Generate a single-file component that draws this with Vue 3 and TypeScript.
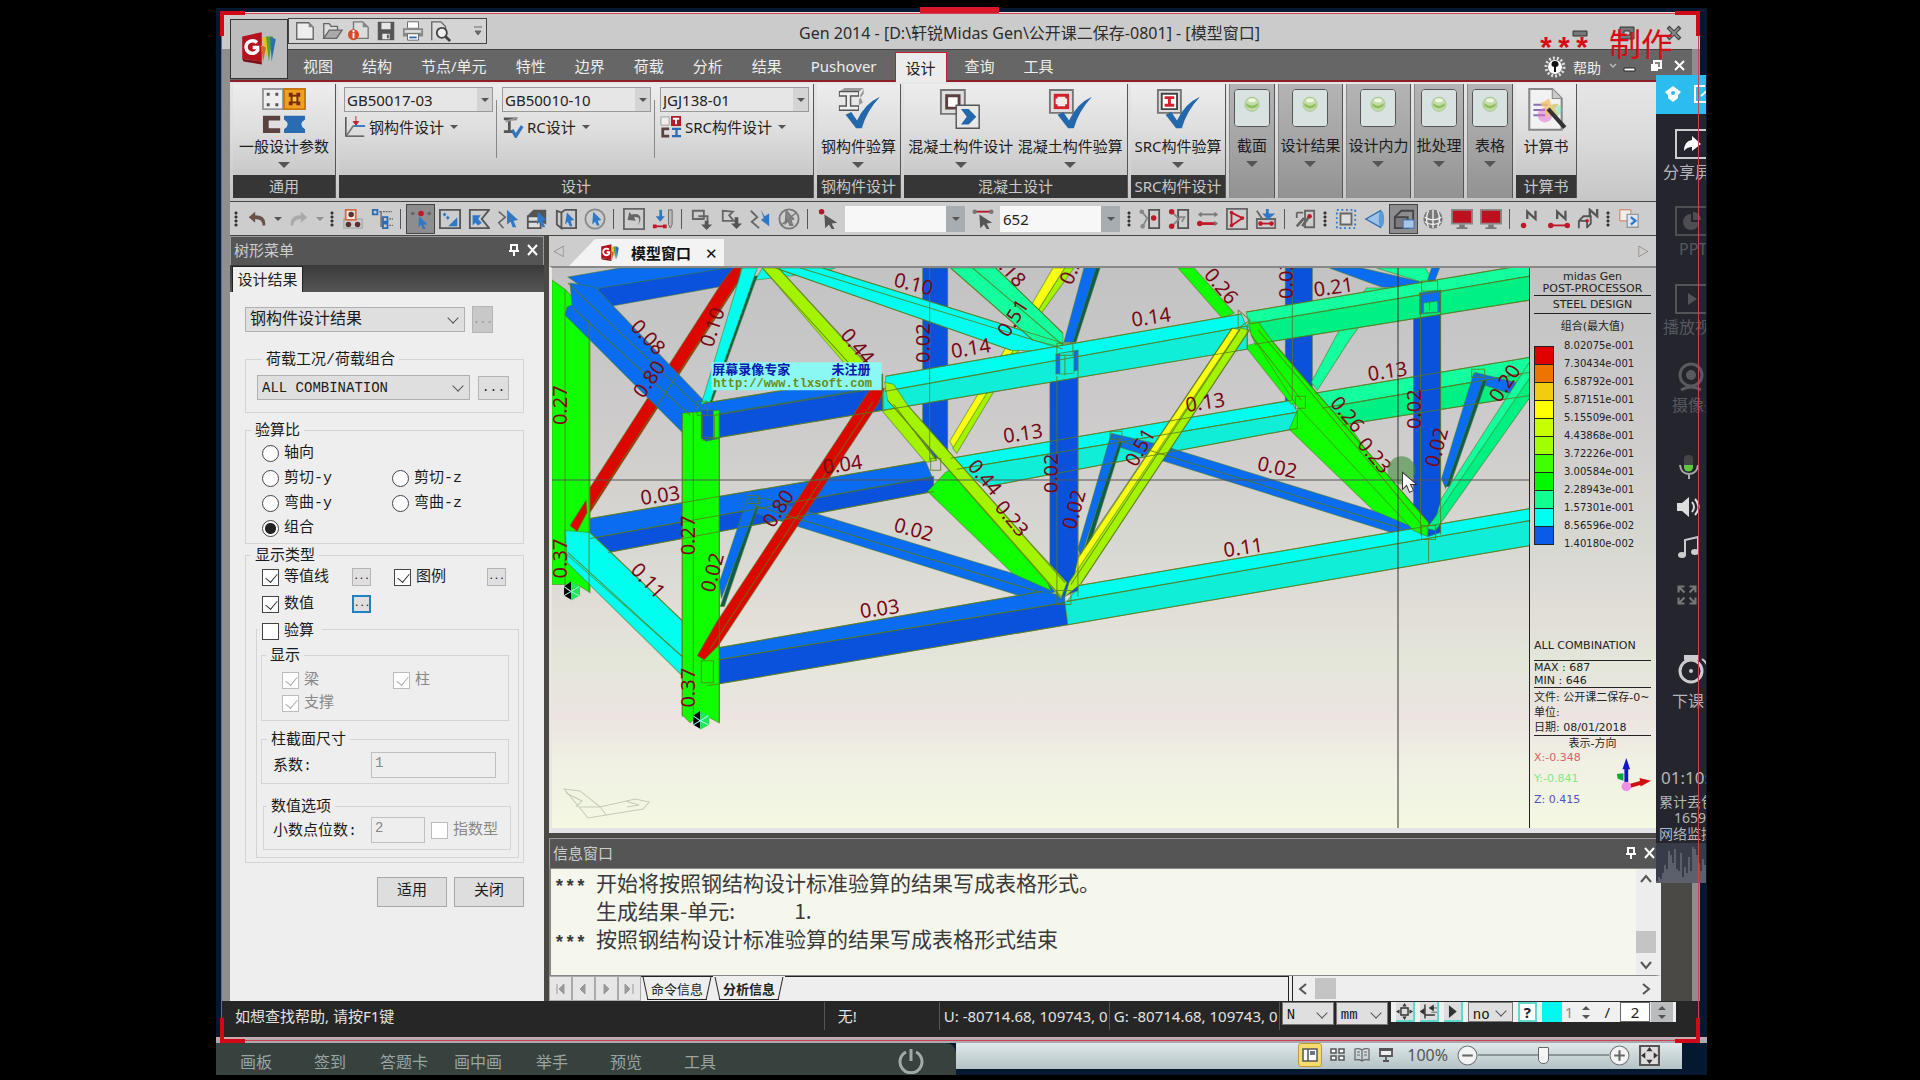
<script setup lang="ts">
import { ref } from 'vue'

interface Tool { k: 'btn' | 'sep' | 'grip' | 'caret' | 'combo'; icon?: string; on?: boolean; value?: string; dim?: boolean }
interface Shape { p: string; f: string }
interface Tag { t: string; x: number; y: number; r: number }

const glyph: Record<string, string> = {
  logo: '<path d="M3 6 17 3v21L3 22z" fill="#b5121f"/><path d="M3 22 17 24v2L4 24z" fill="#7c0d15"/><path d="M13.500 10.500A4.500 4.500 0 1 0 14 16v-2h-3.500" fill="none" stroke="#fff" stroke-width="2.500"/><path d="m17 7 3 14 2-15z" fill="#e8c020"/><path d="m20 6 2 18 3-18z" fill="#58a03a"/><path d="m23 6 1 18 3-16z" fill="#2b6fb0"/><path d="m16 12 2 12 2-10z" fill="#d8642a"/>',
  fresh: '<path d="M3 3h13l5 5v13H3z" fill="#eee" stroke="#666" stroke-width="1.500"/><path d="M16 3v5h5z" fill="#888"/>',
  open: '<path d="M3 20V4h6l2 3h7v4" fill="#ddd" stroke="#666" stroke-width="1.500"/><path d="M3 20 9 11h14l-6 9z" fill="#aaa" stroke="#666" stroke-width="1.500"/>',
  info: '<path d="M6 2h10l6 6v12H6z" fill="#ddd" stroke="#777" stroke-width="1.500"/><path d="M16 2v6h6z" fill="#888"/><circle cx="6" cy="16" r="6" fill="#d84a2c"/><path d="M6 11v2M6 14v6" stroke="#fff" stroke-width="2"/>',
  save: '<path d="M3 2h18v20H3z" fill="#555"/><path d="M7 3h10v7H7zM8 15h8v6H8z" fill="#e6e6e6"/><path d="M13 16h2v4h-2z" fill="#555"/>',
  print: '<path d="M6 2h12v7H6z" fill="#fff" stroke="#666"/><path d="M1 9h22v9H1z" fill="#888"/><path d="M3 11h18v3H3z" fill="#ddd"/><path d="M6 15h12v7H6z" fill="#fff" stroke="#666"/><path d="M8 18h8v2H8z" fill="#2d68b0"/>',
  preview: '<path d="M3 22V2h10l5 5v3" fill="#ddd" stroke="#666" stroke-width="1.500"/><circle cx="14" cy="14" r="5.500" fill="#eee" stroke="#444" stroke-width="2"/><path d="m18 18 5 5" stroke="#444" stroke-width="3"/>',
  general: '<g stroke-width="2"><path d="M1 1h21v21H1z" fill="#eee" stroke="#999"/><path d="M23 1h22v21H23z" fill="#f0a020" stroke="#c87808"/></g><path d="M5 5h3v3H5zM14 5h3v3h-3zM5 16h3v3H5zM14 16h3v3h-3z" fill="#555"/><path d="M28 5h4v2h4V5h4v4h-2v5h2v4h-4v-2h-4v2h-4v-4h2V9h-2z" fill="#7a2b10"/><path d="M32 9h4v5h-4z" fill="#f8c848"/><path d="M1 29h18v5H7v8h12v5H1z" fill="#5b4140"/><path d="M23 29h22v4q-8 5 0 10v4H23v-4q8-5 0-10z" fill="#2a6cb4"/>',
  graph: '<path d="M2 1v21h20" fill="none" stroke="#444" stroke-width="1.500"/><path d="m3 21 7-10h12" fill="none" stroke="#777" stroke-width="2"/><path d="M13 0v7M10 6h6l-3 4z" stroke="#c02030" fill="#c02030"/><path d="M11 11h12" stroke="#3c78c0" stroke-width="2"/>',
  rc: '<path d="M2 3h14M2 17h10M8 3v14" stroke="#555" stroke-width="3"/><path d="m4 6 13-4" stroke="#999" stroke-width="2"/><path d="m11 15 4 7 7-11" fill="none" stroke="#3474b8" stroke-width="3.500"/>',
  src: '<path d="M1 1h9v9H1z" fill="#eee" stroke="#999"/><path d="M12 0h11v11H12z" fill="#b21c28"/><path d="M14 3h7M17.500 3v6" stroke="#fff" stroke-width="2"/><path d="M10 14H3v8h7" fill="none" stroke="#5b4140" stroke-width="3"/><path d="M13 14h10M13 22h10M18 14v8" stroke="#2a6cb4" stroke-width="2.500"/>',
  steel: '<path d="m4 3 5-3h20l-5 4zM25 8l4-7v5l-5 6v6l4-3" fill="#999"/><path d="M3 6h21M3 21h21M13 6v15" stroke="#555" stroke-width="6"/><path d="M4 6h19M4 21h19M13 6v15" stroke="#eee" stroke-width="3"/>',
  bigcheck: '<path d="m10 28 6-3 6 9Q30 16 46 9 32 24 27 42h-6z" fill="#2468ac"/>',
  box: '<path d="M2 2h25v25H2z" fill="#ddd" stroke="#777" stroke-width="2"/><path d="M8 8h13v13H8z" fill="#fff" stroke="#5b4140" stroke-width="3"/>',
  boxarrow: '<path d="M18 18h24v24H18z" fill="#e8e8e8" stroke="#555" stroke-width="1.500"/><path d="M23 22h8l8 8-8 8h-8l6-8z" fill="#2468ac"/>',
  redbox: '<path d="M2 2h24v24H2z" fill="#ddd" stroke="#777" stroke-width="2"/><path d="M6 6h16v16H6z" fill="#d6202c"/><path d="M10 9h8v2h2v6h-2v2h-8v-2H8v-6h2z" fill="#f6e8e8"/>',
  srcbox: '<path d="M2 2h24v24H2z" fill="#ddd" stroke="#777" stroke-width="2"/><path d="M6 6h16v16H6z" fill="#fff" stroke="#444" stroke-width="2"/><path d="M9 10h10M9 18h10M14 10v8" stroke="#d6202c" stroke-width="3"/>',
  report: '<path d="M5 1h22l9 9v30H5z" fill="#f2f2f2" stroke="#888" stroke-width="2"/><path d="M27 1v9h9" fill="#ccc" stroke="#888"/><path d="M9 16h14M9 21h12M9 26h12" stroke="#8a6fb8" stroke-width="2"/><circle cx="20" cy="26" r="7" fill="#e070d0" opacity=".55"/><circle cx="30" cy="21" r="6" fill="#70e0b0" opacity=".5"/><path d="m24 10 2 6 7-1-4 5 4 6-8-2-5 5V19l-5-4z" fill="#f3c36a" opacity=".8"/><path d="m23 20 16 18" stroke="#333" stroke-width="4"/>',
  ball: '<path d="M0 0h36v38H0z" fill="#d8e2e0"/><circle cx="18" cy="15" r="7.500" fill="#c4dca8" stroke="#a9c596"/><path d="M12 14q6 5 12 0v3q-6 5-12 0z" fill="#8fbf5e"/><ellipse cx="18" cy="11" rx="4" ry="2" fill="#eef6e4"/>',
  undo: '<path d="M3 10 10 4v4q11 0 11 9v2h-3q0-7-8-7v4z" fill="#6b5048"/>',
  redo: '<path d="M21 10 14 4v4Q3 8 3 17v2h3q0-7 8-7v4z" fill="#a9a9a9"/>',
  nodes: '<path d="M2 12h20v10H2z" fill="none" stroke="#aaa" stroke-width="1.500"/><path d="M4 2h11v11H4z" fill="#f5e6e0" stroke="#d0704a" stroke-width="2"/><circle cx="10" cy="7" r="3" fill="#5b3030"/><circle cx="7" cy="18" r="3" fill="#5b3030"/><circle cx="17" cy="18" r="3" fill="#5b3030"/>',
  tree: '<path d="M2 2h5v5H2zM13 10h5v5h-5zM13 17h5v5h-5z" fill="none" stroke="#2a6cb4" stroke-width="2"/><path d="M9 4h2v16h2M11 12h2" fill="none" stroke="#666" stroke-width="1.500"/><path d="M13 4h10M20 12h4M20 19h4" stroke="#666" stroke-width="1.500" stroke-dasharray="2 1"/>',
  pick: '<path d="M1 6h22" stroke="#888"/><circle cx="12" cy="6" r="3" fill="#c01828"/><circle cx="3" cy="6" r="2" fill="#666"/><circle cx="21" cy="6" r="2" fill="#666"/><path d="m10 9 9 9h-4l2 5h-3l-2-5-3 3z" fill="#2f78c8"/>',
  win: '<path d="M1 2h22v20H1z" fill="none" stroke="#555" stroke-width="2"/><path d="m5 6 7 7" stroke="#2f78c8" stroke-width="3" stroke-dasharray="3 2"/><path d="M20 10v10H10z" fill="#2f78c8"/>',
  poly: '<path d="M23 2H2v20h21l-8-10z" fill="none" stroke="#555" stroke-width="2"/><path d="M5 8v11l3-3 3 3 4-3-4-4 3-4z" fill="#2f78c8"/>',
  zig: '<path d="m2 4 7 6-7 6 5 6" fill="none" stroke="#666" stroke-width="1.800"/><path d="m11 2 12 11-5 1 3 7h-4l-2-6-4 3z" fill="#2f78c8"/>',
  plane: '<path d="m2 8 6-6h14v16" fill="#555"/><path d="M2 9h14v13H2zM2 15h14" fill="#ddd" stroke="#555" stroke-width="2"/><path d="m13 4 9 9-4 1 3 7h-3l-3-6-3 3z" fill="#2f78c8"/>',
  vol: '<path d="m2 3 5 2v17l-5-4zM7 5l4-3h12v20H7z" fill="none" stroke="#555" stroke-width="2"/><path d="m13 5 8 8-4 1 2 6h-3l-2-5-3 3z" fill="#2f78c8"/>',
  circ: '<circle cx="12" cy="12" r="10.500" fill="none" stroke="#888" stroke-width="2"/><path d="m10 4 9 9-4 1 2 5h-3l-2-4-3 3z" fill="#2f78c8"/>',
  prev: '<path d="M1 1h22v22H1z" fill="none" stroke="#666" stroke-width="2"/><path d="M16 19q5-10-4-9l2 4-9-1 2-9 2 3q11-2 10 6-1 4-3 6z" fill="#666"/>',
  recent: '<path d="M8 2v7H4l5 6 5-6h-3V2z" fill="#2f78c8"/><path d="M2 20h12" stroke="#c01828" stroke-width="2"/><path d="M1 18h4v4H1zM12 18h4v4h-4z" fill="#c01828"/><path d="M18 2h4v16l-2 4-2-4z" fill="#bbb" stroke="#666"/>',
  act: '<path d="M2 3h12v9H2zM8 9h10v7" fill="none" stroke="#666" stroke-width="2"/><path d="M15 14v4h-4l6 6 6-6h-4v-4z" fill="#555"/>',
  act2: '<path d="m3 3 11 1-4 4 5 6H3z" fill="none" stroke="#666" stroke-width="2"/><path d="M16 10v7h-4l6 6 6-6h-4v-7z" fill="#555"/>',
  inv: '<path d="m2 3 7 7-6 5 8 7" fill="none" stroke="#666" stroke-width="2"/><path d="m13 2 4 7 5-3v14l-9-7 3-2z" fill="#2f78c8"/>',
  allact: '<circle cx="12" cy="12" r="10.500" fill="none" stroke="#777" stroke-width="2"/><path d="m9 3 8 9-3 1 2 6h-3l-2-5-3 3zM3 19 20 5" stroke="#777" stroke-width="1.500" fill="#888"/>',
  nodeSel: '<circle cx="5" cy="4" r="3" fill="#b01828"/><path d="m8 7 14 9-6 1 3 6h-3l-3-5-4 4z" fill="#555"/>',
  elemSel: '<path d="M2 4h20" stroke="#b01828" stroke-width="2"/><circle cx="3" cy="4" r="2.500" fill="#777"/><circle cx="21" cy="4" r="2.500" fill="#777"/><path d="m8 7 14 9-6 1 3 6h-3l-3-5-4 4z" fill="#555"/>',
  n1: '<path d="M11 2h11v20H11z" fill="none" stroke="#555" stroke-width="2"/><path d="m3 4 6 7-5 9" fill="none" stroke="#888" stroke-width="2"/><circle cx="3" cy="4" r="2.500" fill="#888"/><circle cx="4" cy="20" r="2.500" fill="#888"/><circle cx="16" cy="11" r="3" fill="#c01828"/>',
  n2: '<path d="M11 2h11v20H11z" fill="none" stroke="#555" stroke-width="2"/><path d="m4 4 8 8-8 8M12 10h6l-3 5" fill="none" stroke="#888" stroke-width="2"/><circle cx="4" cy="4" r="3" fill="#c01828"/><circle cx="4" cy="20" r="3" fill="#c01828"/>',
  n3: '<path d="M3 7h18" stroke="#777" stroke-width="2"/><path d="M3 17h18" stroke="#c01828" stroke-width="3"/><path d="m1 7 4-3v6zM23 7l-4-3v6z" fill="#777"/><circle cx="3" cy="17" r="3" fill="#c01828"/><path d="m23 17-4-3v6z" fill="#777"/>',
  n4: '<path d="M1 1h22v22H1z" fill="none" stroke="#666" stroke-width="2"/><path d="m6 5 12 6-12 8z" fill="none" stroke="#c01828" stroke-width="2"/><circle cx="6" cy="5" r="2" fill="#c01828"/><circle cx="18" cy="11" r="2" fill="#c01828"/><circle cx="6" cy="19" r="2" fill="#c01828"/>',
  n5: '<path d="M2 12h20v10H2zM2 3l6 9" fill="none" stroke="#666" stroke-width="2"/><path d="M7 17h11" stroke="#c01828" stroke-width="2"/><circle cx="6" cy="17" r="2.500" fill="#c01828"/><circle cx="18" cy="17" r="2.500" fill="#c01828"/><path d="M12 1h3v5h7l-8 7-6-7h4z" fill="#2f78c8"/>',
  n6: '<path d="M3 5h7M3 5v6M12 3h10v18H12z" fill="none" stroke="#666" stroke-width="2"/><path d="m3 20 8-9M16 10l-7 10" stroke="#666" stroke-width="3"/><circle cx="17" cy="9" r="2.500" fill="#c01828"/>',
  fit: '<path d="M6 6h12v12H6z" fill="#ddd" stroke="#666" stroke-width="2"/><path d="M2 2h20v20H2z" fill="none" stroke="#2f78c8" stroke-width="2" stroke-dasharray="2 3"/>',
  cone: '<path d="M2 12 18 3v18z" fill="#9cc4ea" stroke="#2f6cb0" stroke-width="1.500"/><ellipse cx="19" cy="12" rx="3" ry="9" fill="#5c9bd8"/>',
  hidden: '<path d="M2 10 9 3h13v13" fill="none" stroke="#444" stroke-width="2"/><path d="M2 10h14v12H2z" fill="#7c7c80" stroke="#444" stroke-width="2"/><path d="M11 13h12v9H11z" fill="#a9c4e4" stroke="#2f6cb0"/>',
  globe: '<circle cx="12" cy="12" r="10.500" fill="#777"/><path d="M3 10q9 6 18 0M3 15q9 6 18 0M12 2v20M7 3q-4 9 0 18M17 3q4 9 0 18" fill="none" stroke="#eee" stroke-width="1.500"/>',
  screen: '<path d="M1 2h22v15H1z" fill="#c01020" stroke="#888" stroke-width="2"/><path d="M9 18h6v3h3v2H6v-2h3z" fill="#777"/>',
  nn1: '<circle cx="5" cy="19" r="3" fill="#c01828"/><path d="M9 12V4l9 8V3" fill="none" stroke="#555" stroke-width="2.500"/>',
  nn2: '<path d="M3 19h18" stroke="#c01828" stroke-width="2"/><circle cx="3" cy="19" r="3" fill="#c01828"/><circle cx="21" cy="19" r="3" fill="#c01828"/><path d="M10 12V4l9 8V3" fill="none" stroke="#555" stroke-width="2.500"/>',
  nn3: '<path d="m2 14 5-5h8v8l-4 4M2 14h9v8M2 14v8" fill="none" stroke="#555" stroke-width="2"/><circle cx="11" cy="14" r="2" fill="#c01828"/><path d="M14 9V2l8 7V1" fill="none" stroke="#555" stroke-width="2.500"/>',
  copy: '<path d="M2 2h12v12H2z" fill="#eee" stroke="#d0704a"/><path d="M10 7h12v14H10z" fill="#dde6f2" stroke="#999" stroke-width="1.500"/><path d="m14 10 5 4-5 4" fill="none" stroke="#2f78c8" stroke-width="2.500"/>',
  move4: '<path d="M7 7h10v10H7z" fill="none" stroke="#333" stroke-width="2"/><path d="M12 0l3 5H9zM12 24l3-5H9zM0 12l5-3v6zM24 12l-5-3v6z" fill="#333"/>',
  shrink: '<path d="M7 2v20M7 17h14" stroke="#333" stroke-width="2"/><path d="m0 12 6-4v8zM24 7h-9M19 3l-6 4 6 4zM24 13h-8" stroke="#333" fill="#333"/>',
  play: '<path d="m7 3 11 9-11 9z" fill="#333"/>',
}

const quick = ['fresh', 'open', 'info', 'save', 'print', 'preview']
const tabs = ['视图', '结构', '节点/单元', '特性', '边界', '荷载', '分析', '结果', 'Pushover', '设计', '查询', '工具']
const activeTab = ref('设计')
const codes = [
  { code: 'GB50017-03', icon: 'graph', name: '钢构件设计' },
  { code: 'GB50010-10', icon: 'rc', name: 'RC设计' },
  { code: 'JGJ138-01', icon: 'src', name: 'SRC构件设计' },
]
const groups = [
  { title: '钢构件设计', w: 84, items: [{ name: '钢构件验算', art: glyph.steel + glyph.bigcheck }] },
  { title: '混凝土设计', w: 224, items: [{ name: '混凝土构件设计', art: glyph.box + glyph.boxarrow }, { name: '混凝土构件验算', art: glyph.redbox + glyph.bigcheck }] },
  { title: 'SRC构件设计', w: 95, items: [{ name: 'SRC构件验算', art: glyph.srcbox + glyph.bigcheck }] },
]
const folded = [
  { name: '截面', w: 46 }, { name: '设计结果', w: 65 }, { name: '设计内力', w: 65 }, { name: '批处理', w: 50 }, { name: '表格', w: 46 },
]

const b = (icon: string, on = false): Tool => ({ k: 'btn', icon, on })
const sep: Tool = { k: 'sep' }
const grip: Tool = { k: 'grip' }
const tools: Tool[] = [
  grip, b('undo'), { k: 'caret' }, b('redo'), { k: 'caret', dim: true }, grip, b('nodes'), b('tree'), sep,
  b('pick', true), b('win'), b('poly'), b('zig'), b('plane'), b('vol'), b('circ'), sep,
  b('prev'), b('recent'), sep, b('act'), b('act2'), b('inv'), b('allact'), sep,
  b('nodeSel'), { k: 'combo', value: '' }, b('elemSel'), { k: 'combo', value: '652' }, grip,
  b('n1'), b('n2'), b('n3'), b('n4'), b('n5'), sep, b('n6'), grip,
  b('fit'), b('cone'), b('hidden', true), b('globe'), b('screen'), b('screen'), sep, b('nn1'), b('nn2'), b('nn3'), grip, b('copy'),
]

const ratio = ref('组合')
const ratios = ['轴向', '', '剪切-y', '剪切-z', '弯曲-y', '弯曲-z', '组合']

const B1 = '#0a6cf0', B2 = '#0a52dc', C1 = '#00ffee', C2 = '#10eed8', T1 = '#14ff9e', T2 = '#00f084'
const G = '#10ff00', L = '#a4f400', Y = '#f8ff10', R = '#dc0800', K = '#0c5c50'
const shapes: Shape[] = [
  // far frame
  { f: G, p: '552,280 566,290 590,318 590,592 577,584 552,584' },
  { f: B1, p: '568,277 620,268 745,268 592,294' },
  { f: B2, p: '592,294 600,288 740,266 740,283 612,306' },
  { f: B2, p: '922,268 947,268 947,452 935,458 922,440' },
  { f: B2, p: '1284,268 1311,268 1311,392 1284,404' },
  { f: Y, p: '1052,268 1064,268 1030,322 953,448 949,441 1030,306' },
  { f: L, p: '1064,268 1073,268 1037,318 956,453 952,448 1030,322' },
  { f: T1, p: '1365,288 1385,288 1348,340 1316,390 1310,382 1338,330' },
  { f: B1, p: '590,518 925,461 932,478 590,540' },
  { f: B2, p: '590,538 933,476 933,491 608,552' },
  { f: C1, p: '950,458 1290,400 1296,412 956,469' },
  { f: C2, p: '956,469 1296,412 1296,428 987,486' },
  { f: T1, p: '1313,393 1529,357 1529,372 1320,408' },
  { f: T2, p: '1320,408 1529,372 1529,395 1340,425' },
  { f: R, p: '733,268 741,268 736,286 590,512 590,487 722,282' },
  { f: B1, p: '570,283 595,287 705,402 703,412 687,413 683,433 565,315 567,307 572,305' },
  { f: R, p: '586,500 587,512 577,531 570,525' },
  { f: C1, p: '755,280 762,268 835,268 822,272' },
  { f: C1, p: '775,268 822,268 1062,343 1062,352 1010,350' },
  { f: K, p: '753,276 757,276 711,404 706,404' },
  { f: C1, p: '742,268 757,268 709,404 701,404' },
  { f: L, p: '762,268 778,268 880,380 862,384' },
  { f: T1, p: '950,268 995,268 1062,333 1062,347 1032,340' },
  { f: G, p: '1177,268 1193,268 1233,313 1221,318' },
  { f: K, p: '1094,268 1099,268 1075,342 1070,342' },
  { f: B1, p: '1083,268 1095,268 1072,342 1063,342' },
  { f: B1, p: '1328,268 1360,268 1425,283 1400,288 1380,287' },
  { f: T1, p: '1375,268 1424,268 1434,286 1420,282' },
  { f: B1, p: '1430,268 1438,268 1432,284 1426,280' },
  // lower bracing
  { f: C1, p: '565,530 590,532 682,620 682,658 567,556' },
  { f: C1, p: '567,554 682,656 682,675 567,562' },
  { f: B1, p: '750,498 765,498 1062,588 1040,597 1025,597 756,513' },
  { f: K, p: '753,506 758,506 724,606 720,606' },
  { f: B1, p: '747,498 757,504 721,598 719,582' },
  { f: B1, p: '1110,433 1157,444 1413,523 1413,528 1390,532 1160,460 1116,446' },
  { f: K, p: '1116,442 1121,442 1084,560 1080,560' },
  { f: B1, p: '1110,434 1119,440 1080,556 1077,548' },
  { f: B1, p: '1473,372 1529,386 1529,400 1480,384' },
  { f: K, p: '1480,380 1485,380 1448,486 1444,486' },
  { f: B1, p: '1472,373 1482,378 1444,488 1440,478' },
  { f: B1, p: '718,647 1040,591 1064,595 1064,603 718,660' },
  { f: B2, p: '718,659 1064,602 1067,624 707,685' },
  { f: C1, p: '1078,585 1529,508 1529,521 1066,601' },
  { f: C2, p: '1064,601 1529,520 1529,545 1067,624' },
  { f: G, p: '927,491 945,472 956,466 1046,580 1050,590 1012,573' },
  { f: L, p: '882,411 893,404 936,460 925,462' },
  { f: G, p: '1288,429 1297,408 1340,414 1416,524 1405,524 1372,510' },
  { f: G, p: '1244,346 1258,342 1300,402 1290,404' },
  // top chord and near columns
  { f: B1, p: '703,403 882,374 882,388 715,416 700,410' },
  { f: B2, p: '715,414 882,386 882,410 702,440 702,412' },
  { f: B2, p: '1049,376 1077,370 1077,590 1060,597 1049,580' },
  { f: B2, p: '1412,305 1439,300 1439,532 1427,536 1412,520' },
  { f: C1, p: '885,376 1240,314 1246,328 885,392' },
  { f: C2, p: '883,391 1246,326 1246,349 883,410' },
  { f: T1, p: '1245,312 1529,264 1529,276 1248,325' },
  { f: T2, p: '1246,324 1529,276 1529,300 1254,344' },
  { f: B1, p: '1055,354 1077,350 1077,370 1055,374' },
  { f: C2, p: '1059,353 1073,351 1073,373 1059,374' },
  { f: B1, p: '1418,293 1439,290 1439,312 1418,314' },
  { f: T2, p: '1422,303 1436,301 1436,312 1422,313' },
  { f: L, p: '884,382 893,384 907,405 1030,543 1066,582 1060,598 1030,563 992,520 887,400' },
  { f: Y, p: '1231,328 1239,330 1072,582 1077,558' },
  { f: L, p: '1239,328 1248,330 1080,583 1064,596 1068,582' },
  { f: G, p: '1248,322 1257,322 1270,340 1427,522 1426,536 1412,530 1295,405 1250,335' },
  { f: T1, p: '1529,360 1529,378 1434,518 1440,498' },
  { f: T2, p: '1529,376 1529,396 1434,530 1425,528 1434,516' },
  { f: G, p: '682,413 719,410 719,722 700,712 690,722 682,714' },
  { f: B2, p: '701,410 713,410 713,438 719,438 706,441 701,438' },
  { f: R, p: '869,390 884,388 878,403 718,645 704,659 697,655 716,622' },
]
const wires = [
  'M565 290V590M589 320V592M693 413V718M719 413V722M682 413V716', 'M572 307 690 415M568 283 700 408M568 552 682 656M590 532 682 620',
  'M590 538 932 477M590 518 925 461M608 552 933 491', 'M956 469 1296 412M950 458 1290 400M987 486 1296 428V410',
  'M1313 393 1529 357M1320 408 1529 372M1340 425 1529 395', 'M703 403 882 374M715 415 882 387M702 440 882 410V374',
  'M885 376 1240 314M885 391 1246 326M883 410 1246 349V326', 'M1245 312 1529 264M1248 324 1529 276M1254 344 1529 300',
  'M718 647 1040 591M718 659 1064 602M707 685 1067 624', 'M1078 585 1529 508M1066 601 1529 520M1067 624 1529 545',
  'M929 268V460M1056 376V596M1077 350V596M1291 268V400M1419 292V534M1439 290V534', 'M762 268 862 378M778 268 876 374M907 405 1064 582M887 400 1060 596M893 404 936 460',
  'M1239 329 1070 584M1231 328 1077 556M1248 330 1080 583', 'M1257 330 1420 524M1270 340 1427 522M1250 335 1300 400', 'M775 268 1010 350M822 268 1062 343M800 268 1062 349',
  'M950 268 1032 340M995 268 1062 333M972 268 1062 345', 'M736 284 592 506M872 402 710 648M754 505 1040 592M1116 440 1400 528',
  'M697 401h10v14h-10zM702 415h12v22h-12zM701 660h12v22h-12zM747 495h11v8h-11zM1109 431h12v8h-12zM1470 369h13v8h-13z',
  'M1056 343h16v12h-16zM1064 355v20M1237 310l12 10-12 8zM1420 281h16v10h-16zM1428 291v20M1056 590h14v14h-14zM1420 525h14v14h-14zM1427 539v22M930 458h10v12h-10zM1294 396h10v12h-10z',
]
const tags: Tag[] = [
  { t: '0.10', x: 913, y: 284, r: 14 }, { t: '0.18', x: 1008, y: 269, r: 48 }, { t: '0.08', x: 648, y: 337, r: 47 }, { t: '0.80', x: 649, y: 379, r: -55 },
  { t: '0.10', x: 712, y: 327, r: -72 }, { t: '0.44', x: 857, y: 346, r: 50 }, { t: '0.02', x: 922, y: 343, r: -90 }, { t: '0.14', x: 970, y: 348, r: -9 },
  { t: '0.51', x: 1012, y: 318, r: -57 }, { t: '0.27', x: 560, y: 405, r: -90 }, { t: '0.03', x: 660, y: 495, r: -8 }, { t: '0.04', x: 842, y: 464, r: -8 },
  { t: '0.80', x: 778, y: 508, r: -57 }, { t: '0.02', x: 913, y: 529, r: 15 }, { t: '0.13', x: 1022, y: 433, r: -8 }, { t: '0.44', x: 984, y: 477, r: 50 },
  { t: '0.23', x: 1011, y: 518, r: 50 }, { t: '0.27', x: 688, y: 535, r: -90 }, { t: '0.02', x: 712, y: 572, r: -75 }, { t: '0.11', x: 648, y: 580, r: 47 },
  { t: '0.37', x: 560, y: 558, r: -90 }, { t: '0.37', x: 688, y: 687, r: -90 }, { t: '0.03', x: 879, y: 608, r: -8 }, { t: '0.14', x: 1150, y: 317, r: -8 },
  { t: '0.22', x: 1072, y: 265, r: -68 }, { t: '0.26', x: 1220, y: 286, r: 50 }, { t: '0.02', x: 1285, y: 279, r: -90 }, { t: '0.21', x: 1332, y: 287, r: -8 },
  { t: '0.13', x: 1204, y: 402, r: -8 }, { t: '0.13', x: 1386, y: 371, r: -8 }, { t: '0.51', x: 1139, y: 447, r: -60 }, { t: '0.02', x: 1050, y: 473, r: -90 },
  { t: '0.02', x: 1073, y: 509, r: -75 }, { t: '0.26', x: 1346, y: 414, r: 50 }, { t: '0.23', x: 1373, y: 455, r: 50 }, { t: '0.02', x: 1276, y: 467, r: 13 },
  { t: '0.02', x: 1412, y: 409, r: -90 }, { t: '0.02', x: 1435, y: 447, r: -75 }, { t: '0.20', x: 1503, y: 383, r: -57 }, { t: '0.11', x: 1242, y: 547, r: -8 },
]
const scale = [
  { c: '#e00000', v: '8.02075e-001' }, { c: '#ee7400', v: '7.30434e-001' }, { c: '#f2cc10', v: '6.58792e-001' }, { c: '#ffff00', v: '5.87151e-001' },
  { c: '#c8ff00', v: '5.15509e-001' }, { c: '#a0ff00', v: '4.43868e-001' }, { c: '#40ff00', v: '3.72226e-001' }, { c: '#00f800', v: '3.00584e-001' },
  { c: '#10ff90', v: '2.28943e-001' }, { c: '#00fff0', v: '1.57301e-001' }, { c: '#0a5ce8', v: '8.56596e-002' }, { c: '', v: '1.40180e-002' },
]
const dock = ['画板', '签到', '答题卡', '画中画', '举手', '预览', '工具']
const wave = [38, 34, 36, 30, 22, 26, 8, 12, 20, 6, 26, 28, 10, 34, 24, 30, 14, 28, 4, 6, 12, 20, 28, 16, 22].map((h, i) => ({ x: i * 2, h }))
</script>

<template>
  <div class="desk">
    <div class="screen">
      <div class="app">
        <header class="title">
          <button class="logo" aria-label="Gen"><svg viewBox="0 0 30 30" v-html="glyph.logo" /></button>
          <div class="quick">
            <button v-for="q in quick" :key="q" :aria-label="q"><svg viewBox="0 0 24 24" v-html="glyph[q]" /></button>
            <svg class="more" viewBox="0 0 12 12"><path d="M2 2h8M3 6h6L6 10z" stroke="#666" fill="#666" /></svg>
          </div>
          <h1>Gen 2014 - [D:\轩锐Midas Gen\公开课二保存-0801] - [模型窗口]</h1>
          <div class="winbtns">
            <button aria-label="最小化"><svg viewBox="0 0 16 16"><path d="M1 6h14v5H1z" fill="#777" stroke="#333" /></svg></button>
            <button aria-label="最大化"><svg viewBox="0 0 16 16"><path d="M1 2h14v12H1z" fill="#777" stroke="#333" /><path d="M5 6h6v4H5z" fill="#ccc" stroke="#333" /></svg></button>
            <button aria-label="关闭"><svg viewBox="0 0 16 16"><path d="m2 2 12 12M14 2 2 14" stroke="#444" stroke-width="4" /><path d="m3 3 10 10M13 3 3 13" stroke="#888" stroke-width="2" /></svg></button>
          </div>
        </header>

        <div class="frame">
          <nav class="menu">
            <button v-for="t in tabs" :key="t" :class="{ on: t === activeTab }" @click="activeTab = t">{{ t }}</button>
            <span class="grow" />
            <svg class="bulb" viewBox="0 0 22 22"><circle cx="11" cy="11" r="9" fill="none" stroke="#ddd" stroke-width="3" stroke-dasharray="2 2" /><circle cx="11" cy="11" r="7" fill="#fff" /><path d="M11 5a3 3 0 0 1 1 6v5h-2v-5a3 3 0 0 1 1-6" fill="#111" /></svg>
            <a href="#help">帮助</a>
            <svg class="mdi" viewBox="0 0 78 16"><path d="m2 6 3 3 3-3" fill="none" stroke="#bbb" stroke-width="1.500" /><path d="M16 10h11v3H16z" fill="#fff" stroke="#222" /><path d="M46 3h7v7h-7z" fill="#888" stroke="#fff" stroke-width="2" /><path d="M43 6h7v7h-7z" fill="#fff" /><path d="m67 3 9 9M76 3l-9 9" stroke="#fff" stroke-width="2" /></svg>
          </nav>

          <section class="ribbon">
            <div class="group" style="width: 103px">
              <div class="tools">
                <button class="big"><svg viewBox="0 0 46 48" v-html="glyph.general" />一般设计参数<i class="tri" /></button>
              </div>
              <footer>通用</footer>
            </div>
            <div class="group" style="width: 475px">
              <div class="tools codes">
                <div v-for="c in codes" :key="c.code" class="code">
                  <div class="pick"><select :aria-label="c.name"><option>{{ c.code }}</option></select><span><i class="tri small" /></span></div>
                  <button><svg viewBox="0 0 24 24" v-html="glyph[c.icon]" />{{ c.name }}<i class="tri small" /></button>
                </div>
              </div>
              <footer>设计</footer>
            </div>
            <div v-for="g in groups" :key="g.title" class="group" :style="{ width: g.w + 'px' }">
              <div class="tools">
                <button v-for="i in g.items" :key="i.name" class="big"><svg viewBox="0 0 46 48" v-html="i.art" />{{ i.name }}<i class="tri" /></button>
              </div>
              <footer>{{ g.title }}</footer>
            </div>
            <div v-for="f in folded" :key="f.name" class="group fold" :style="{ width: f.w + 'px' }">
              <div class="tools">
                <button class="big"><span class="tile"><svg viewBox="0 0 36 38" v-html="glyph.ball" /></span>{{ f.name }}<i class="tri" /></button>
              </div>
            </div>
            <div class="group" style="width: 61px">
              <div class="tools"><button class="big"><svg viewBox="0 0 42 44" v-html="glyph.report" />计算书</button></div>
              <footer>计算书</footer>
            </div>
          </section>

          <div class="bar">
            <template v-for="(t, i) in tools" :key="i">
              <button v-if="t.k === 'btn'" class="tool" :class="{ on: t.on }" :aria-label="t.icon"><svg viewBox="0 0 24 24" v-html="glyph[t.icon!]" /></button>
              <span v-else-if="t.k === 'sep'" class="sep" />
              <span v-else-if="t.k === 'grip'" class="grip" />
              <span v-else-if="t.k === 'caret'" class="drop" :class="{ dim: t.dim }"><i class="tri small" /></span>
              <div v-else class="entry"><select aria-label="选择"><option>{{ t.value }}</option></select><span><i class="tri small" /></span></div>
            </template>
          </div>

          <main class="body">
            <aside class="side">
              <div class="cap"><span>树形菜单</span><svg viewBox="0 0 30 14"><path d="M3 8V2h6v6M1 8h10M6 8v5" fill="none" stroke="#fff" stroke-width="2" /><path d="m20 2 9 10M29 2l-9 10" stroke="#fff" stroke-width="2" /></svg></div>
              <div class="stab"><span>设计结果</span></div>
              <form class="form" @submit.prevent>
                <div class="line top">
                  <div class="sel wide"><select aria-label="结果"><option>钢构件设计结果</option></select></div>
                  <button class="dots" disabled>...</button>
                </div>
                <fieldset class="f1">
                  <legend>荷载工况/荷载组合</legend>
                  <div class="line">
                    <div class="sel"><select class="mono" aria-label="荷载组合"><option>ALL COMBINATION</option></select></div>
                    <button class="dots mid">...</button>
                  </div>
                </fieldset>
                <fieldset class="f2">
                  <legend>验算比</legend>
                  <template v-for="(r, i) in ratios" :key="i">
                    <label v-if="r"><input v-model="ratio" type="radio" name="ratio" :value="r"><span>{{ r }}</span></label>
                    <span v-else />
                  </template>
                </fieldset>
                <fieldset class="f3">
                  <legend>显示类型</legend>
                  <div class="show">
                    <label><input type="checkbox" checked><span>等值线</span></label><button class="dots tiny">...</button>
                    <label><input type="checkbox" checked><span>图例</span></label><button class="dots tiny">...</button>
                  </div>
                  <div class="show second">
                    <label><input type="checkbox" checked><span>数值</span></label><button class="dots tiny focus">...</button>
                  </div>
                  <fieldset class="inner">
                    <legend><label><input type="checkbox"><span>验算</span></label></legend>
                    <fieldset class="parts">
                      <legend>显示</legend>
                      <label class="off"><input type="checkbox" checked disabled><span>梁</span></label>
                      <label class="off"><input type="checkbox" checked disabled><span>柱</span></label>
                      <label class="off"><input type="checkbox" checked disabled><span>支撑</span></label>
                    </fieldset>
                    <fieldset class="size">
                      <legend>柱截面尺寸</legend>
                      <div class="field"><label for="factor">系数:</label><input id="factor" value="1" disabled></div>
                    </fieldset>
                    <fieldset class="opts">
                      <legend>数值选项</legend>
                      <div class="field"><label for="digits">小数点位数:</label><input id="digits" class="short" value="2" disabled><label class="off"><input type="checkbox" disabled><span>指数型</span></label></div>
                    </fieldset>
                  </fieldset>
                </fieldset>
                <div class="acts"><button>适用</button><button>关闭</button></div>
              </form>
            </aside>

            <section class="work">
              <div class="doctabs">
                <i class="arr">◁</i>
                <div class="doc"><svg viewBox="0 0 30 30" v-html="glyph.logo" /><b>模型窗口</b><button aria-label="关闭窗口">✕</button></div>
                <i class="arr">▷</i>
              </div>
              <div class="view">
                <svg class="model" viewBox="552 268 977 559" preserveAspectRatio="xMinYMin slice">
                  <polygon v-for="(s, i) in shapes" :key="i" :points="s.p" :fill="s.f" stroke="#4c7a20" stroke-opacity=".55" />
                  <path v-for="(w, i) in wires" :key="'w' + i" :d="w" fill="none" stroke="#5c7818" stroke-opacity=".8" />
                  <path d="M564 788 580 790 600 806 635 798 649 801 643 808 588 817zM580 806 600 806M600 806l6 8M566 792l16 8-6 6M625 800l14 4-12 2" fill="none" stroke="#c4ccb4" />
                  <g v-for="x in [[571, 590], [700, 719]]" :key="x[0]" :transform="`translate(${x[0]} ${x[1]})`">
                    <path d="M0-9-7-4v9l7 4z" fill="#000" /><path d="m0-9 9 5v9l-9 5z" fill="#20e850" /><path d="m-7-4 7 5-7 4M0 1l8-5M0 1l8 4" stroke="#9fe" fill="none" />
                  </g>
                  <text v-for="(t, i) in tags" :key="'t' + i" class="tag" :transform="`translate(${t.x} ${t.y}) rotate(${t.r})`" y="7">{{ t.t }}</text>
                  <path d="M711 362h170v28H711z" fill="#8cf8f4" />
                  <text class="wm" x="712" y="374">屏幕录像专家</text><text class="wm" x="831" y="374">未注册</text>
                  <text class="url" x="713" y="387">http://www.tlxsoft.com</text>
                  <circle cx="1400" cy="470" r="14" fill="#3e8a3a" opacity=".6" />
                  <path d="M552 479.500H1529" stroke="#555" /><path d="M1396.500 268V827" stroke="#333" />
                  <path d="m1401 472v17l4-4 3 7 4-2-3-6h6z" fill="#fff" stroke="#333" />
                </svg>
                <div class="legend">
                  <p class="c">midas Gen</p><p class="c u">POST-PROCESSOR</p><p class="c u steel">STEEL DESIGN</p>
                  <p class="c combo">组合(最大值)</p>
                  <ul><li v-for="s in scale" :key="s.v"><i :style="{ background: s.c }" :class="{ none: !s.c }" /><span>{{ s.v }}</span></li></ul>
                  <p class="u all">ALL COMBINATION</p>
                  <p class="mm">MAX : 687</p><p class="u mm last">MIN : 646</p>
                  <p class="cn">文件: 公开课二保存-0~</p><p class="cn">单位:</p><p class="cn u">日期: 08/01/2018</p>
                  <p class="c cn">表示-方向</p>
                  <div class="axes">
                    <div><p class="x">X:-0.348</p><p class="y">Y:-0.841</p><p class="z">Z: 0.415</p></div>
                    <svg viewBox="0 0 40 40"><path d="M14 29V10" stroke="#1414c8" stroke-width="4" /><path d="m10 13 4-12 4 12z" fill="#1414c8" /><path d="m16 31 14-4" stroke="#d01010" stroke-width="4" /><path d="m28 22 12 3-11 6z" fill="#d01010" /><path d="m4 18 7-1v8l-6-2z" fill="#10a838" /><circle cx="14" cy="31" r="5" fill="#f090e8" /></svg>
                  </div>
                </div>
              </div>
              <div class="cap info"><span>信息窗口</span><svg viewBox="0 0 30 14"><path d="M3 8V2h6v6M1 8h10M6 8v5" fill="none" stroke="#fff" stroke-width="2" /><path d="m20 2 9 10M29 2l-9 10" stroke="#fff" stroke-width="2" /></svg></div>
              <div class="log">
                <div class="lines">
                  <p><i>***</i>开始将按照钢结构设计标准验算的结果写成表格形式。</p>
                  <p><i />生成结果-单元:<em>1.</em></p>
                  <p><i>***</i>按照钢结构设计标准验算的结果写成表格形式结束</p>
                </div>
                <div class="vbar"><svg viewBox="0 0 20 20"><path d="m5 13 5-6 5 6" /></svg><b /><svg viewBox="0 0 20 20"><path d="m5 7 5 6 5-6" /></svg></div>
              </div>
              <div class="sheets">
                <button v-for="d in ['M7 3v10M14 3 9 8l5 5z', 'M12 3 7 8l5 5z', 'M8 3l5 5-5 5z', 'M14 3v10M6 3l5 5-5 5z']" :key="d" class="nav" aria-label="翻页"><svg viewBox="0 0 20 16"><path :d="d" fill="#999" stroke="#999" /></svg></button>
                <button class="sheet">命令信息</button><button class="sheet on">分析信息</button>
                <span class="rest" />
                <div class="hbar"><svg viewBox="0 0 20 20"><path d="m13 5-6 5 6 5" /></svg><b /><span class="grow" /><svg viewBox="0 0 20 20"><path d="m7 5 6 5-6 5" /></svg></div>
              </div>
            </section>
          </main>
        </div>

        <footer class="status">
          <span class="hint">如想查找帮助, 请按F1键</span>
          <span class="none">无!</span><span class="pos">U: -80714.68, 109743, 0</span><span class="pos">G: -80714.68, 109743, 0</span>
          <div class="sel unit"><select class="mono" aria-label="力"><option>N</option></select></div>
          <div class="sel unit"><select class="mono" aria-label="长度"><option>mm</option></select></div>
          <div class="mini">
            <button v-for="m in ['move4', 'shrink', 'play']" :key="m" :aria-label="m"><svg viewBox="0 0 24 24" v-html="glyph[m]" /></button>
            <div class="sel snap"><select class="mono" aria-label="捕捉"><option>no</option></select></div>
            <button class="q">?</button><i class="cy" /><span class="n1">1</span>
            <i class="spin"><i class="tri small up" /><i class="tri small" /></i><span class="slash">/</span>
            <input value="2" aria-label="级别"><i class="spin box"><i class="tri small up" /><i class="tri small" /></i>
          </div>
        </footer>
      </div>

      <div class="bottom">
        <nav class="dock"><a v-for="d in dock" :key="d" href="#dock">{{ d }}</a>
          <button aria-label="电源"><svg viewBox="0 0 26 26"><path d="M8 4a11 11 0 1 0 10 0M13 1v12" fill="none" stroke="#a2aaa8" stroke-width="3" /></svg></button>
        </nav>
        <div class="ppt">
          <button class="v on" aria-label="普通"><svg viewBox="0 0 16 16"><path d="M1 2h14v12H1zM6 2v12" fill="#fff" stroke="#555" stroke-width="1.500" /><path d="M8 4h5v4H8z" fill="#678" /></svg></button>
          <button class="v" aria-label="浏览"><svg viewBox="0 0 16 16"><path d="M1 2h5v4H1zM9 2h5v4H9zM1 9h5v4H1zM9 9h5v4H9z" fill="#fff" stroke="#555" stroke-width="1.500" /></svg></button>
          <button class="v" aria-label="阅读"><svg viewBox="0 0 16 16"><path d="M1 2q4-1 7 1 3-2 7-1v11q-4-1-7 1-3-2-7-1zM8 3v11M3 5h3M3 8h3M10 5h3M10 8h3" fill="none" stroke="#666" stroke-width="1.200" /></svg></button>
          <button class="v" aria-label="放映"><svg viewBox="0 0 16 16"><path d="M1 2h14M2 3h12v6H2zM8 9v4M5 14h6" fill="#eee" stroke="#555" stroke-width="1.800" /></svg></button>
          <span class="pct">100%</span>
          <button class="z" aria-label="缩小"><svg viewBox="0 0 20 20"><circle cx="10" cy="10" r="9" fill="#f2f4f4" stroke="#777" /><path d="M5 10h10" stroke="#666" stroke-width="2" /></svg></button>
          <input type="range" min="0" max="100" value="50" aria-label="缩放">
          <button class="z" aria-label="放大"><svg viewBox="0 0 20 20"><circle cx="10" cy="10" r="9" fill="#f2f4f4" stroke="#777" /><path d="M5 10h10M10 5v10" stroke="#666" stroke-width="2" /></svg></button>
          <button class="z fit" aria-label="适应"><svg viewBox="0 0 20 20"><path d="M1 1h18v18H1z" fill="#ddd" stroke="#555" stroke-width="2" /><path d="M10 2 7 6h6zM10 18l-3-4h6zM2 10l4-3v6zM18 10l-4-3v6z" fill="#333" /></svg></button>
        </div>
      </div>

      <aside class="live">
        <div class="head"><svg viewBox="0 0 50 24"><path d="m2 10 8-6 8 6-3 3v3l-5 4-5-4v-3z" fill="#fff" /><circle cx="10" cy="11" r="2" fill="#2abdee" /><path d="M42 4H32v16h16v-7M38 14l10-9" fill="none" stroke="#fff" stroke-width="2" /></svg></div>
        <button class="it"><svg viewBox="0 0 36 30"><path d="M1 1h34v28H1z" fill="none" stroke="#ccc" stroke-width="2" /><path d="M17 7l9 8-9 7v-4q-5 0-8 4 0-10 8-11z" fill="#fff" /></svg>分享屏</button>
        <button class="it dim"><svg viewBox="0 0 36 30"><path d="M1 1h34v28H1z" fill="none" stroke="#999" stroke-width="2" /><path d="M16 8v8h8a8 8 0 1 1-8-8" fill="#999" /><path d="M18 6a8 8 0 0 1 8 8h-8z" fill="#999" /></svg><span class="in">PPT</span></button>
        <button class="it dim"><svg viewBox="0 0 36 30"><path d="M1 1h34v28H1z" fill="none" stroke="#aaa" stroke-width="2" /><path d="m13 9 9 6-9 6z" fill="#aaa" /></svg>播放视</button>
        <button class="it dim"><svg viewBox="0 0 36 30"><circle cx="16" cy="13" r="11" fill="none" stroke="#bbb" stroke-width="3" /><circle cx="16" cy="13" r="5" fill="#bbb" /><path d="M6 28q10-6 20 0" fill="none" stroke="#bbb" stroke-width="3" /></svg><span class="in2">摄像头</span></button>
        <div class="snd">
          <svg viewBox="0 0 26 26"><rect x="8" y="1" width="9" height="16" rx="4" fill="#444" /><path d="M8 11h9v2a4 4 0 0 1-9 0z" fill="#5cc83c" /><path d="M4 11q1 9 9 9t9-9M13 20v5" fill="none" stroke="#aaa" stroke-width="2" /></svg>
          <svg viewBox="0 0 26 26"><path d="M1 9h5l7-6v20l-7-6H1z" fill="#ddd" /><path d="M16 8q4 5 0 10M19 5q7 8 0 16" fill="none" stroke="#ddd" stroke-width="2" /></svg>
          <svg viewBox="0 0 26 26"><path d="M9 21V6l13-3v15" fill="none" stroke="#ccc" stroke-width="2" /><ellipse cx="6" cy="21" rx="4" ry="3" fill="#ccc" /><ellipse cx="19" cy="18" rx="4" ry="3" fill="#ccc" /></svg>
          <svg viewBox="0 0 26 26"><path d="M3 10V3h7M23 10V3h-7M3 16v7h7M23 16v7h-7M3 3l7 7M23 3l-7 7M3 23l7-7M23 23l-7-7" fill="none" stroke="#777" stroke-width="2.500" /></svg>
        </div>
        <button class="it end"><svg viewBox="0 0 36 30"><circle cx="16" cy="17" r="11" fill="none" stroke="#ccc" stroke-width="3" /><path d="M9 1h14v5H9z" fill="#ccc" /><path d="M27 5q6 4 6 11" fill="none" stroke="#ccc" stroke-width="2" /><circle cx="16" cy="17" r="2" fill="#ccc" /></svg><span class="in2">下课</span></button>
        <p class="time">01:10:</p><p class="net">累计丢包</p><p class="net num">1659</p><p class="net">网络监控</p>
        <svg class="wave" viewBox="0 0 50 40" preserveAspectRatio="none"><path v-for="w in wave" :key="w.x" :d="`M${w.x + 1} 0v${w.h}`" stroke="#2c303c" stroke-width="1.500" /></svg>
      </aside>
      <div class="capture"><i class="h" /><i class="tl" /><i class="tr" /><i class="bl" /><i class="br" /></div>
      <div class="maker"><b>***</b> <span>制作</span></div>
    </div>
  </div>
</template>

<style>
html, body { background: #000; }
</style>
<style scoped>
* { box-sizing: border-box; }
button, input, select { font: inherit; color: inherit; margin: 0; padding: 0; border: 0; background: none; border-radius: 0; appearance: none; outline: none; }
p, h1, ul { margin: 0; padding: 0; font-weight: 400; }
i, em { font-style: normal; }
svg { display: block; flex: none; }
.grow { flex: 1; }
.desk { display: grid; grid-template-columns: 216fr 1491fr 213fr; min-height: 100vh; background: #000; font: 15px/20px "Noto Sans", "Noto Sans CJK SC", sans-serif; color: #222; overflow: hidden; }
.screen { grid-column: 2; position: relative; display: flex; flex-direction: column; margin: 8px 0 5px; padding-top: 4px; background: #04182f; min-width: 0; }
.app { flex: 1; display: flex; flex-direction: column; margin: 0 7px 0 6px; background: #c9c9c9; min-width: 0; }
.tri { display: inline-block; border: 6px solid transparent; border-top-color: #555; border-bottom: 0; }
.tri.small { border-width: 4px; border-bottom-width: 0; }
.tri.up { transform: rotate(180deg); }

.title { height: 37px; display: flex; position: relative; align-items: center; padding-left: 66px; background: #cbcbcb; border-top: 1px solid #e8dede; }
.logo { position: absolute; left: 8px; top: 6px; width: 58px; height: 60px; display: grid; place-items: center; background: #bdbdbd; border: 1px solid #333; z-index: 2; }
.logo svg { width: 42px; height: 42px; }
.quick { display: flex; gap: 5px; align-items: center; width: 199px; height: 26px; padding-left: 5px; border: 1px solid #444; background: #d4d4d4; }
.quick button { width: 22px; height: 22px; }
.quick svg { width: 22px; height: 22px; }
.quick .more { width: 12px; height: 12px; margin-left: 16px; }
.title h1 { flex: 1; text-align: center; font-size: 16px; line-height: 20px; padding-top: 4px; white-space: nowrap; color: #2c2c2c; }
.winbtns { width: 128px; display: flex; gap: 31px; margin-top: 4px; }
.winbtns svg { width: 16px; height: 16px; }

.frame { flex: 1; display: flex; flex-direction: column; border: solid #8e8e8e; border-width: 0 8px; min-width: 0; background: #4a4a4a; }
.menu { height: 33px; display: flex; gap: 7px; align-items: stretch; padding: 2px 0 0 62px; background: #666; border-top: 1px solid #444; border-bottom: 2px solid #8c2026; color: #eee; }
.menu button { padding: 0 11px; line-height: 28px; white-space: nowrap; }
.menu button.on { background: #ececec; color: #222; border: 1px solid #c02030; border-bottom: 0; margin-bottom: -2px; padding: 0 10px; }
.menu a { color: #eee; font-size: 14px; line-height: 32px; text-decoration: none; }
.bulb { width: 22px; height: 22px; margin-top: 4px; }
.mdi { width: 78px; height: 16px; margin: 6px 6px 0 0; }

.ribbon { display: flex; gap: 3px; height: 119px; padding: 2px 0 3px 3px; background: linear-gradient(#e6e6e6, #dadada 50%, #c6c6c6); overflow: hidden; }
.group { display: flex; flex-direction: column; flex: none; border-right: 1px solid #555; }
.group .tools { flex: 1; display: flex; justify-content: space-evenly; background: linear-gradient(#ededed, #dedede 50%, #c8c8c8); }
.group footer { height: 23px; background: #363636; color: #c8c8c8; text-align: center; line-height: 22px; white-space: nowrap; font-size: 15px; }
.fold .tools { background: linear-gradient(#b4b4b4, #a2a2a2 60%, #929292); border-left: 1px solid #888; }
.big { display: flex; flex-direction: column; align-items: center; font-size: 15px; line-height: 20px; padding-top: 4px; white-space: nowrap; color: #1c1c1c; }
.big svg { width: 44px; height: 46px; margin-bottom: 2px; }
.big .tri { margin-top: 6px; }
.tile { margin: 1px 0 8px; border: 1px solid #555; border-radius: 4px; overflow: hidden; background: #d8e2e0; }
.tile svg { width: 34px; height: 36px; margin: 0; }
.codes.tools { justify-content: flex-start; }
.code { width: 158px; padding: 3px 0 0 5px; position: relative; }
.code:not(:last-child)::after { content: ""; position: absolute; right: 0; top: 16px; height: 58px; border-right: 1px solid #888; }
.pick { display: flex; width: 149px; height: 25px; border: 1px solid #999; background: #e6e6e6; font-size: 15px; }
.pick select { flex: 1; padding-left: 2px; min-width: 0; }
.pick span { width: 15px; display: grid; place-items: center; background: #d4d4d4; }
.code button { display: flex; align-items: center; gap: 3px; margin-top: 3px; font-size: 15px; height: 24px; white-space: nowrap; }
.code button svg { width: 22px; height: 22px; }
.code button .tri { margin-left: 3px; }

.bar { display: flex; align-items: center; height: 35px; background: #cdcdcd; border: solid #444; border-width: 1px 0; overflow: hidden; }
.tool { width: 29px; height: 30px; display: grid; place-items: center; flex: none; }
.tool svg { width: 22px; height: 22px; }
.tool.on { background: #8d8d90; border: 1px solid #444; }
.sep { width: 10px; flex: none; height: 20px; background: linear-gradient(90deg, transparent 4px, #555 4px 5px, transparent 5px); }
.grip { width: 12px; flex: none; height: 16px; background: radial-gradient(circle, #333 1px, transparent 2px) 50% 0 / 12px 4px; }
.drop { width: 13px; flex: none; display: grid; place-items: center; }
.drop.dim { opacity: .5; }
.entry { display: flex; flex: none; width: 120px; height: 26px; margin: 0 3px; background: #f7f7f7; font-size: 15px; }
.entry select { flex: 1; padding-left: 3px; min-width: 0; }
.entry span { width: 19px; background: #a7adb0; display: grid; place-items: center; }

.body { flex: 1; display: flex; padding-right: 31px; background: #4b4945; min-height: 0; }
.side { width: 314px; flex: none; display: flex; flex-direction: column; background: #eee; margin-right: 5px; }
.cap { height: 29px; display: flex; align-items: center; justify-content: space-between; padding: 0 5px 2px 3px; background: #555; color: #ccc; border: 1px solid #999; border-bottom: 0; font-size: 15px; }
.cap svg { width: 30px; height: 14px; }
.stab { height: 27px; background: linear-gradient(#3a3a3a, #555); padding: 1px 0 0 2px; }
.stab span { display: block; width: 71px; height: 26px; background: #eee; border: 1px solid #222; border-bottom: 0; text-align: center; font-size: 15px; line-height: 24px; }
.form { padding: 14px 20px 0 15px; flex: 1; font: 15px/20px "Liberation Mono", "Noto Sans CJK SC", monospace; color: #1a1a1a; }
.line { display: flex; align-items: center; justify-content: space-between; }
.sel { position: relative; height: 25px; width: 213px; border: 1px solid #b0b0b0; background: #dfdfdf; }
.sel::after { content: ""; position: absolute; right: 7px; top: 6px; width: 7px; height: 7px; border: solid #555; border-width: 0 1px 1px 0; transform: rotate(45deg); pointer-events: none; }
.sel select { width: 100%; height: 100%; padding-left: 4px; }
.sel .mono { font: 14px "Liberation Mono", monospace; }
.sel.wide { width: 220px; }
.wide select { font-size: 16px; }
.dots { width: 21px; height: 27px; background: #dfdfdf; border: 1px solid #b5b5b5; line-height: 22px; font-size: 13px; text-align: center; overflow: hidden; }
.dots:disabled { background: #c8c8c8; color: #888; margin-right: 31px; font-size: 11px; }
.dots.mid { width: 31px; height: 24px; }
.dots.tiny { width: 19px; height: 18px; line-height: 14px; font-size: 9px; font-weight: 700; }
.dots.focus { border: 2px solid #2080c0; line-height: 12px; }
fieldset { margin: 0; border: 1px solid #d4d4d4; min-width: 0; }
legend { padding: 0 4px; margin-left: 5px; height: 20px; line-height: 23px; }
label { display: flex; align-items: center; gap: 5px; white-space: nowrap; }
label span { padding-top: 1px; }
input[type=radio], input[type=checkbox] { width: 17px; height: 17px; border: 1px solid #444; background: #fff; flex: none; }
input[type=radio] { border-radius: 50%; }
input[type=radio]:checked { background: radial-gradient(circle, #222 5px, #fff 6px); }
input[type=checkbox]:checked { display: grid; }
input[type=checkbox]:checked::after { content: ""; width: 6px; height: 10px; margin: 1px 0 0 5px; border: solid #333; border-width: 0 1px 1px 0; transform: rotate(40deg); }
.off { color: #888; }
.off input { border-color: #bbb; }
.off input:checked::after { border-color: #aaa; }
.f1 { margin-top: 16px; padding: 6px 14px 12px 11px; }
.f2 { margin-top: 7px; padding: 1px 0 2px 16px; display: grid; grid-template-columns: 130px 1fr; grid-auto-rows: 25px; }
.f2 legend { margin-left: -11px; }
.f3 { margin-top: 1px; padding: 0 4px 4px 10px; }
.f3 > legend { margin-left: -5px; }
.show { display: grid; grid-template-columns: 90px 42px 93px 19px; align-items: center; height: 24px; padding-left: 6px; }
.show.second { height: 30px; }
.inner { padding: 6px 9px 7px 4px; }
.inner > legend { margin-left: -3px; padding: 0 8px 0 4px; }
.parts { padding: 4px 0 5px 20px; display: grid; grid-template-columns: 111px 1fr; grid-auto-rows: 23px; }
.parts > legend { margin-left: -16px; }
.size { margin-top: 8px; padding: 3px 12px 5px 11px; }
.size legend, .opts legend { margin-left: -6px; }
.opts { margin: 12px -2px 0 2px; padding: 1px 9px 6px 9px; }
.field { display: flex; align-items: center; height: 26px; }
.field > label:first-child { width: 98px; flex: none; padding-top: 4px; }
.field > input { width: 125px; height: 26px; border: 1px solid #c0c0c0; color: #888; padding: 0 3px 4px; font-size: 14px; }
.field > .short { width: 54px; margin-right: 6px; }
.acts { display: flex; justify-content: flex-end; gap: 7px; margin-top: 14px; }
.acts button { width: 70px; height: 30px; background: #dedede; border: 1px solid #a8a8a8; }

.work { flex: 1; min-width: 0; display: flex; flex-direction: column; }
.doctabs { height: 30px; display: flex; align-items: flex-end; background: #cdcdcd; }
.arr { width: 20px; text-align: center; font-size: 12px; line-height: 28px; color: #666; }
.doc { display: flex; align-items: center; width: 155px; height: 27px; padding-left: 30px; margin-right: auto; background: #f3f3f3; clip-path: polygon(0 100%, 26px 0, 100% 0, 100% 100%); color: #111; font-size: 15px; line-height: 24px; }
.doc svg { width: 22px; height: 22px; margin-right: 10px; }
.doc button { margin-left: auto; padding-right: 6px; }
.arr:last-child { margin-right: 8px; }
.view { flex: 1; min-height: 566px; display: flex; border: solid #e4e4e4; border-width: 2px 4px 5px 3px; border-top-color: #888; background: linear-gradient(#c3c3c3, #cccaca 25%, #d8d8d2 50%, #e2ded8 62%, #e4e6da 70%, #ece4e0 80%, #f0f0e4 88%, #f4f8e2); margin-bottom: 5px; }
.model { flex: 1; width: 0; height: auto; overflow: hidden; }
.tag { font: 20px "Noto Sans", sans-serif; fill: #780814; text-anchor: middle; }
.wm { font: bold 13px "Noto Sans CJK SC", sans-serif; fill: #0818b0; }
.url { font: bold 12px "Liberation Mono", monospace; fill: #6a8c10; }
.legend { width: 128px; flex: none; border-left: 1px solid #222; padding: 3px 6px 0 4px; font: 11px/12px "DejaVu Sans", "Noto Sans CJK SC", sans-serif; color: #222; white-space: nowrap; }
.legend .c { text-align: center; }
.legend .u { border-bottom: 1px solid #222; }
.legend .steel { line-height: 17px; }
.legend .combo { line-height: 26px; }
.legend ul { list-style: none; height: 216px; }
.legend li { display: flex; height: 18px; gap: 10px; font-size: 10px; }
.legend li i { width: 20px; height: 19px; border: 1px solid #222; margin-top: 6px; }
.legend li i.none { border-color: transparent; }
.legend .all { line-height: 30px; margin-top: 75px; height: 30px; }
.legend .mm { line-height: 13px; }
.legend .last { margin-bottom: 2px; }
.legend .cn { line-height: 15px; }
.axes { display: flex; justify-content: space-between; }
.axes p { height: 21px; line-height: 14px; }
.x { color: #e06060; } .y { color: #80e880; } .z { color: #5050c8; }
.axes svg { width: 38px; height: 38px; margin-top: 6px; }
.info { flex: none; height: 30px; }
.log { height: 108px; flex: none; display: flex; background: #f5f6ec; border: 1px solid #888; border-width: 1px 5px 1px 2px; border-right-color: #eee; }
.lines { flex: 1; font: 21px/27px "Noto Sans CJK SC", sans-serif; padding-left: 3px; color: #3a3a3a; overflow: hidden; white-space: nowrap; }
.lines p { display: flex; height: 28px; }
.lines i { width: 42px; height: 27px; font: bold 18px/36px "Liberation Mono", monospace; }
.lines em { padding-left: 59px; }
.vbar { width: 20px; display: flex; flex-direction: column; background: #ededed; }
.vbar b { height: 22px; background: #c4c4c4; margin: auto 0 2px; }
.vbar svg, .hbar svg { width: 20px; height: 20px; fill: none; stroke: #555; stroke-width: 2; }
.sheets { display: flex; height: 25px; flex: none; background: #eee; border-right: 5px solid #eee; }
.nav { width: 23px; border: 1px solid #aaa; background: #e6e6e6; }
.nav svg { width: 20px; height: 16px; }
.sheet { position: relative; width: 72px; font-size: 13px; border-top: 1px solid #222; }
.sheet::before, .sheet::after { content: ""; position: absolute; top: 0; bottom: 1px; left: 4px; right: 50%; border: solid #222; border-width: 0 0 1px 1px; transform: skewX(12deg); }
.sheet::after { left: 50%; right: 4px; border-width: 0 1px 1px 0; transform: skewX(-12deg); }
.sheet.on { font-weight: 700; border-top-color: transparent; }
.rest { flex: 1; border: 1px solid #222; border-bottom: 0; border-left: 0; }
.hbar { width: 364px; display: flex; align-items: center; margin-left: 3px; border-left: 1px solid #222; }
.hbar b { width: 21px; height: 21px; background: #c4c4c4; margin-left: 2px; }

.status { height: 36px; flex: none; display: flex; align-items: flex-start; background: #262626; color: #e2e2e2; padding: 1px 24px 0 13px; line-height: 29px; white-space: nowrap; }
.status > span { height: 28px; border-right: 1px solid #555; }
.hint { flex: 1; }
.none { width: 115px; padding-left: 13px; }
.status .pos { width: 170px; padding-left: 4px; }
.status .sel { color: #111; height: 23px; border-color: #777; line-height: 20px; }
.sel.unit { width: 52px; margin-left: 2px; }
.mini { display: flex; align-items: center; height: 20px; margin-left: 3px; padding-left: 5px; gap: 5px; background: #f0f0f0; color: #222; line-height: 20px; }
.mini button { width: 19px; height: 20px; background: #ddd; border: 1px solid #60d8d0; border-width: 0 2px 2px 0; }
.mini button svg { width: 17px; height: 17px; }
.status .mini .snap { width: 45px; height: 20px; }
.mini .snap::after { top: 4px; }
.mini .q { border-width: 2px; background: #fff; line-height: 16px; font-weight: 700; }
.cy { width: 20px; height: 20px; background: #00f8f0; }
.n1 { margin-left: -2px; color: #888; }
.spin { width: 16px; display: flex; flex-direction: column; gap: 5px; align-items: center; }
.spin.box { width: 22px; height: 20px; background: #b8bcbc; justify-content: center; margin-right: 3px; }
.slash { padding: 0 5px; }
.mini input { width: 30px; height: 20px; border: 1px solid #666; background: #fff; text-align: center; margin-right: -4px; }

.bottom { display: flex; height: 38px; flex: none; padding-top: 6px; background: linear-gradient(#c9a8ae 0 2px, #a9a9b2 2px 6px, transparent 6px); }
.dock { display: flex; width: 740px; height: 32px; position: relative; background: #37423f; border-radius: 0 10px 0 0; padding-left: 3px; }
.dock a { width: 74px; text-align: center; color: #9aa4a1; text-decoration: none; font-size: 16px; line-height: 38px; }
.dock button { margin: 4px 32px 0 auto; }
.dock button svg { width: 26px; height: 26px; }
.ppt { flex: 1; height: 26px; display: flex; align-items: center; justify-content: flex-end; gap: 7px; margin-right: 25px; padding: 0 22px 2px 0; background: linear-gradient(#e0e8ea, #b4c2c6); color: #555; font-size: 16px; }
.v { width: 17px; height: 24px; display: grid; place-items: center; }
.v svg { width: 16px; height: 16px; }
.v.on { width: 24px; background: #f6dc6c; border: 1px solid #c09a30; border-radius: 3px; }
.pct { margin: 0 2px 0 6px; }
.z svg { width: 21px; height: 21px; }
.fit { margin-left: 2px; }
input[type=range] { width: 131px; height: 18px; margin: 0 -7px; background: linear-gradient(transparent 8px, #8a9698 8px 10px, transparent 10px); }
input[type=range]::-webkit-slider-thumb { appearance: none; width: 11px; height: 17px; background: #f4f6f6; border: 1px solid #666; border-radius: 1px 1px 5px 5px; }

.live { position: absolute; right: 1px; top: 67px; width: 50px; height: 808px; overflow: hidden; background: #24252d; color: #b4b6ba; display: flex; flex-direction: column; }
.live .head { height: 39px; flex: none; background: #2abdee; padding: 7px 0 0 7px; }
.head svg { width: 50px; height: 24px; }
.it { display: flex; flex-direction: column; gap: 3px; padding: 15px 0 0 7px; height: 77px; flex: none; text-align: left; font-size: 16px; line-height: 20px; white-space: nowrap; align-items: flex-start; }
.it svg { width: 36px; height: 30px; margin-left: 12px; }
.dim { opacity: .35; height: 78px; }
.it .in { padding-left: 16px; } .in2 { padding-left: 9px; }
.snd { display: flex; flex-direction: column; gap: 14px; padding: 29px 0 0 20px; height: 203px; flex: none; }
.snd svg { width: 26px; height: 26px; }
.snd svg:last-child { width: 22px; height: 22px; margin-top: 10px; }
.end { height: 88px; padding-top: 26px; }
.end svg { margin-bottom: 4px; }
.time { padding-left: 5px; margin: auto 0 5px; font-size: 17px; line-height: 20px; height: 20px; }
.live .time { margin-bottom: 6px; }
.net { font-size: 14px; line-height: 16px; height: 16px; padding-left: 3px; white-space: nowrap; }
.net.num { padding-left: 18px; }
.wave { width: 50px; height: 40px; margin-top: 1px; background: #5c606c; }

.capture { position: absolute; inset: 5px 8px 34px 5px; border: 1px solid #d04050; pointer-events: none; }
.capture i { position: absolute; width: 25px; height: 25px; border: 0 solid #d00818; }
.capture .h { left: calc(50% - 40px); top: -7px; width: 79px; height: 6px; background: #d81828; }
.capture .tl { left: -2px; top: -3px; border-width: 4px 0 0 4px; } .capture .tr { right: -2px; top: -3px; border-width: 4px 4px 0 0; }
.capture .bl { left: -2px; bottom: -3px; border-width: 0 0 4px 4px; } .capture .br { right: -2px; bottom: -3px; border-width: 0 4px 4px 0; }
.maker { position: absolute; right: 34px; top: 23px; display: flex; gap: 18px; font: 32px/34px "Liberation Mono", "Noto Sans CJK SC", monospace; color: #d80c14; }
.maker b { line-height: 40px; font-size: 30px; }
</style>
